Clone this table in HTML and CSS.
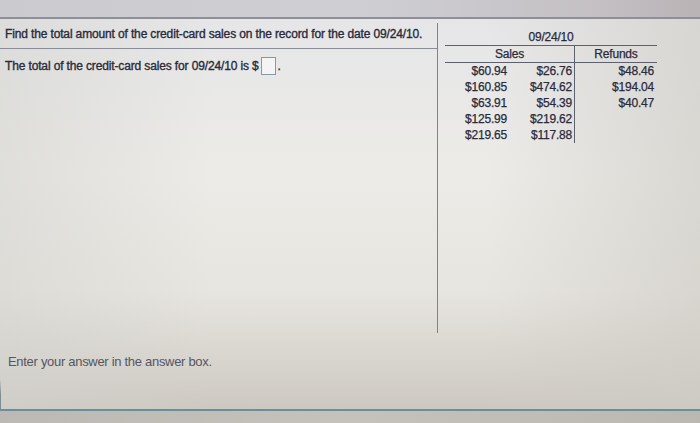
FILE: index.html
```html
<!DOCTYPE html>
<html>
<head>
<meta charset="utf-8">
<link rel="stylesheet" href="styles.css">
</head>
<body>
<div class="screen">
  <div class="topbar"></div>
  <div class="main">
    <div class="content">
      <div class="left">
        <div class="question">Find the total amount of the credit-card sales on the record for the date 09/24/10.</div>
        <div class="answer">The total of the credit-card sales for 09/24/10 is $<span class="box"></span>.</div>
      </div>
      <div class="right">
        <table class="record">
          <tr><th colspan="3" class="date">09/24/10</th></tr>
          <tr class="head"><th colspan="2" class="sales">Sales</th><th class="refunds-h">Refunds</th></tr>
          <tr><td class="c1">$60.94</td><td class="c2">$26.76</td><td class="c3">$48.46</td></tr>
          <tr><td class="c1">$160.85</td><td class="c2">$474.62</td><td class="c3">$194.04</td></tr>
          <tr><td class="c1">$63.91</td><td class="c2">$54.39</td><td class="c3">$40.47</td></tr>
          <tr><td class="c1">$125.99</td><td class="c2">$219.62</td><td class="c3"></td></tr>
          <tr><td class="c1">$219.65</td><td class="c2">$117.88</td><td class="c3"></td></tr>
        </table>
      </div>
    </div>
    <div class="footer">
      <div class="hint">Enter your answer in the answer box.</div>
    </div>
  </div>
  <div class="below"></div>
</div>
</body>
</html>
```
FILE: styles.css
```css
html, body {
  margin: 0;
  padding: 0;
}
body {
  width: 700px;
  height: 423px;
  overflow: hidden;
  font-family: "Liberation Sans", Arial, sans-serif;
  background: #bdbab4;
}
.screen {
  width: 700px;
  height: 423px;
  display: flex;
  flex-direction: column;
}
.topbar {
  height: 17px;
  background: linear-gradient(90deg, #cbcbcf 0%, #cfcfd3 50%, #c4c0c4 85%, #b9b3b5 100%);
  border-bottom: 2px solid #8f8f99;
}
.main {
  height: 390px;
  display: flex;
  flex-direction: column;
  border-bottom: 2px solid #6d8d98;
  background:
    linear-gradient(90deg, rgba(210,210,206,0.5) 0%, rgba(255,255,255,0) 30%, rgba(255,255,255,0) 70%, rgba(205,203,196,0.6) 100%),
    linear-gradient(180deg, #e6e6e8 0%, #ecebe7 40%, #e7e5df 70%, #cdc9c2 100%);
}
.content {
  display: flex;
  height: 314px;
}
.left {
  width: 437px;
  display: flex;
  flex-direction: column;
}
.question {
  height: 29px;
  border-bottom: 1px solid #8a8c98;
  font-size: 12px;
  line-height: 30px;
  padding-left: 5px;
  color: #2a2a3a;
  letter-spacing: -0.14px;
  -webkit-text-stroke: 0.35px #2a2a3a;
  white-space: nowrap;
}
.answer {
  font-size: 12px;
  line-height: 18px;
  padding: 8px 0 0 5px;
  color: #2a2a3a;
  letter-spacing: -0.14px;
  -webkit-text-stroke: 0.35px #2a2a3a;
  display: flex;
  align-items: center;
  white-space: nowrap;
}
.box {
  display: inline-block;
  width: 13px;
  height: 16px;
  border: 1px solid #8d96a8;
  background: #f4f4f4;
  margin-left: 2px;
  margin-right: 2px;
}
.right {
  margin-top: 4px;
  height: 310px;
  border-left: 1px solid #7e8296;
  padding-left: 7px;
}
.record {
  border-collapse: collapse;
  font-size: 12px;
  color: #2a2a3a;
  letter-spacing: -0.2px;
  -webkit-text-stroke: 0.25px #2a2a3a;
}
.record th {
  font-weight: normal;
  padding: 0;
}
.record td {
  padding: 0;
  height: 16px;
  line-height: 16px;
  text-align: right;
}
.date {
  height: 22px;
  text-align: center;
  vertical-align: bottom;
  line-height: 16px;
  padding-bottom: 0 !important;
  border-bottom: 1px solid #5e6070;
}
.head th {
  height: 16px;
  line-height: 16px;
  border-bottom: 1px solid #5e6070;
  text-align: center;
}
.sales {
  width: 129px;
}
.refunds-h {
  border-left: 1px solid #5e6070;
}
.c1 {
  width: 62px;
  padding-right: 3px !important;
}
.c2 {
  width: 62px;
  padding-right: 2px !important;
}
.c3 {
  width: 79px;
  padding-right: 3px !important;
  border-left: 1px solid #5e6070;
}
.footer {
  flex: 1;
  display: flex;
  flex-direction: column;
  border-left: 1px solid #7f8c92;
  border-image: linear-gradient(180deg, rgba(127,140,146,0) 0%, rgba(127,140,146,0) 60%, #7f8c92 80%) 1;
  border-top: 0;
  border-right: 0;
  border-bottom: 0;
}
.hint {
  margin-top: 21px;
  padding-left: 7px;
  font-size: 13px;
  line-height: 16px;
  color: #56565e;
  letter-spacing: -0.3px;
}
.below {
  flex: 1;
  background: linear-gradient(90deg, #bcb9b4 0%, #c5c2bc 50%, #bbb8b2 100%);
}
```
